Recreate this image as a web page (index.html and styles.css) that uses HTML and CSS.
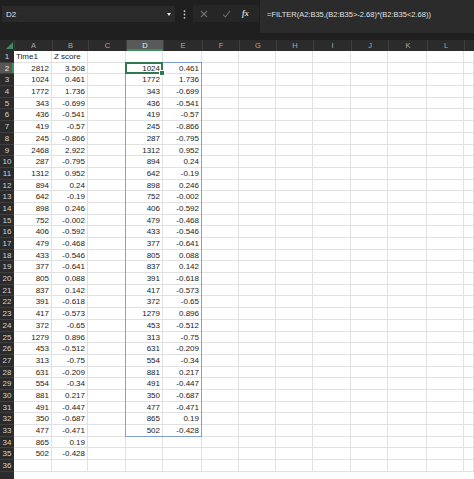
FILE: index.html
```html
<!DOCTYPE html>
<html>
<head>
  <title>Sheet</title>
  <link rel="stylesheet" href="styles.css">
</head>
<body>
  <div class="toolbar">
    <div class="name-box">
      <span>D2</span>
      <span class="caret"></span>
    </div>
    <div class="dots">
      <svg width="3" height="9" viewBox="0 0 3 9"><circle cx="1.5" cy="1.2" r="0.9" fill="#c8c8c8"/><circle cx="1.5" cy="4.5" r="0.9" fill="#c8c8c8"/><circle cx="1.5" cy="7.8" r="0.9" fill="#c8c8c8"/></svg>
    </div>
    <div class="fx-box">
      <svg class="fx-icon" width="8" height="8" viewBox="0 0 8 8"><path d="M1 1L7 7M7 1L1 7" stroke="#6e6e6e" stroke-width="1.1" fill="none"/></svg>
      <svg class="fx-icon" width="9" height="8" viewBox="0 0 9 8"><path d="M1 4.5L3.3 7L8 1" stroke="#6e6e6e" stroke-width="1.1" fill="none"/></svg>
      <span class="fx-label">fx</span>
    </div>
    <div class="formula">=FILTER(A2:B35,(B2:B35&gt;-2.68)*(B2:B35&lt;2.68))</div>
  </div>

  <div class="sheet" id="sheet"></div>

  <script>
    var left = [
      ['Time1', 'Z score'],
      ['2812', '3.508'], ['1024', '0.461'], ['1772', '1.736'], ['343', '-0.699'],
      ['436', '-0.541'], ['419', '-0.57'], ['245', '-0.866'], ['2468', '2.922'],
      ['287', '-0.795'], ['1312', '0.952'], ['894', '0.24'], ['642', '-0.19'],
      ['898', '0.246'], ['752', '-0.002'], ['406', '-0.592'], ['479', '-0.468'],
      ['433', '-0.546'], ['377', '-0.641'], ['805', '0.088'], ['837', '0.142'],
      ['391', '-0.618'], ['417', '-0.573'], ['372', '-0.65'], ['1279', '0.896'],
      ['453', '-0.512'], ['313', '-0.75'], ['631', '-0.209'], ['554', '-0.34'],
      ['881', '0.217'], ['491', '-0.447'], ['350', '-0.687'], ['477', '-0.471'],
      ['865', '0.19'], ['502', '-0.428']
    ];

    // FILTER result: everything except the outlier rows (|z| >= 2.68)
    var right = left.slice(1).filter(function (row) {
      var z = parseFloat(row[1]);
      return z > -2.68 && z < 2.68;
    });

    // last column is the sliver of M at the window edge, its letter is off-screen
    var cols = 'ABCDEFGHIJKL'.split('').concat(['']);
    var sheet = document.getElementById('sheet');

    function addCell(className, text) {
      var el = document.createElement('div');
      el.className = className;
      if (text !== undefined) el.textContent = text;
      sheet.appendChild(el);
      return el;
    }

    addCell('corner');
    cols.forEach(function (c) {
      addCell('col-head' + (c === 'D' ? ' active' : ''), c);
    });

    for (var r = 1; r <= 36; r++) {
      addCell('row-head' + (r === 2 ? ' active' : ''), r);
      cols.forEach(function (c) {
        var value;
        var cls = 'cell';
        if ((c === 'A' || c === 'B') && left[r - 1]) {
          value = left[r - 1][c === 'A' ? 0 : 1];
        }
        if ((c === 'D' || c === 'E') && r >= 2 && r - 2 < right.length) {
          value = right[r - 2][c === 'D' ? 0 : 1];
          cls += ' spill ' + (c === 'D' ? 'sp-l' : 'sp-r');
          if (r === 2) cls += ' sp-t';
          if (r - 1 === right.length) cls += ' sp-b';
        }
        if (value !== undefined && r > 1) cls += ' num';
        var el = addCell(cls, value);
        if (c === 'D' && r === 2) {
          var sel = document.createElement('div');
          sel.className = 'selection';
          sel.appendChild(document.createElement('span')).className = 'handle';
          el.appendChild(sel);
        }
      });
    }
  </script>
</body>
</html>
```

FILE: styles.css
```css
body {
  margin: 0;
  width: 474px;
  height: 479px;
  overflow: hidden;
  background-color: #fff;
  font-family: "Liberation Sans", Arial, sans-serif;
}

/* formula bar */
.toolbar {
  display: flex;
  align-items: flex-start;
  height: 40px;
  background-color: #1f1f1f;
  color: #e0e0e0;
}

.name-box {
  display: flex;
  align-items: center;
  justify-content: space-between;
  width: 173px;
  height: 16px;
  margin: 6px 0 0 2px;
  padding: 0 4px 0 4px;
  box-sizing: border-box;
  background-color: #2a2a2a;
  font-size: 8px;
}

.caret {
  border-left: 2.5px solid transparent;
  border-right: 2.5px solid transparent;
  border-top: 3px solid #e6e6e6;
}

.dots {
  display: flex;
  justify-content: center;
  width: 18px;
  margin-top: 10px;
}

.fx-box {
  display: flex;
  align-items: center;
  width: 66px;
  height: 17px;
  margin-top: 5px;
  padding-left: 7px;
  box-sizing: border-box;
  background-color: #262626;
}

.fx-icon {
  margin-right: 14px;
}

.fx-label {
  margin-left: -3px;
  font-family: "Liberation Serif", serif;
  font-style: italic;
  font-weight: bold;
  font-size: 8px;
  color: #d8d8d8;
}

.formula {
  flex: 1;
  height: 33px;
  margin-left: 1px;
  padding: 10px 0 0 7px;
  box-sizing: border-box;
  background-color: #2b2b2b;
  font-size: 7.5px;
  line-height: 9px;
  white-space: nowrap;
}

/* grid; the left strip keeps the row-header colour below the last row */
.sheet {
  display: grid;
  grid-template-columns: 14px 38px 36px 38px 37px 39px 37px 37px 37px 38px 37px 39px 37px 1fr;
  grid-template-rows: 11px;
  grid-auto-rows: 11.7px;
  height: 439px;
  overflow: hidden;
  background: linear-gradient(to right, #2b2b2b 14px, #fff 14px);
  font-size: 8px;
  color: #1a1a1a;
}

.corner {
  position: relative;
  background-color: #2b2b2b;
}

.corner::after {
  content: '';
  position: absolute;
  right: 1px;
  bottom: 2px;
  border-left: 7px solid transparent;
  border-bottom: 7px solid #3f8a5e;
}

.col-head {
  background-color: #2b2b2b;
  border-left: 1px solid #3e3e3e;
  color: #a9a9a9;
  font-size: 7.5px;
  line-height: 11px;
  text-align: center;
}

.col-head.active {
  background-color: #595959;
  color: #ececec;
  box-shadow: inset 0 -2px #3f8a5e;
}

.row-head {
  background-color: #2b2b2b;
  border-bottom: 1px solid #3e3e3e;
  box-sizing: border-box;
  color: #d2d2d2;
  line-height: 11px;
  text-align: center;
}

.row-head.active {
  background-color: #565656;
  color: #f0f0f0;
  box-shadow: inset -2px 0 #3f8a5e;
}

.cell {
  position: relative;
  padding: 0 2px;
  border-right: 1px solid #e1e1e1;
  border-bottom: 1px solid #e1e1e1;
  box-sizing: border-box;
  line-height: 11px;
  white-space: nowrap;
}

.cell.num {
  text-align: right;
}

.spill::after {
  content: '';
  position: absolute;
  top: -1px;
  left: -1px;
  right: -1px;
  bottom: -1px;
  pointer-events: none;
}

.sp-l::after { border-left: 1px solid #7f9fd6; }
.sp-r::after { border-right: 1px solid #7f9fd6; }
.sp-t::after { border-top: 1px solid #7f9fd6; }
.sp-b::after { border-bottom: 1px solid #7f9fd6; }

.selection {
  position: absolute;
  top: -1px;
  left: -1px;
  right: -1px;
  bottom: -1px;
  border: 2px solid #2f7a4f;
  z-index: 2;
}

.handle {
  position: absolute;
  right: -4px;
  bottom: -4px;
  width: 4px;
  height: 4px;
  background-color: #2f7a4f;
  border: 1px solid #fff;
}
```
